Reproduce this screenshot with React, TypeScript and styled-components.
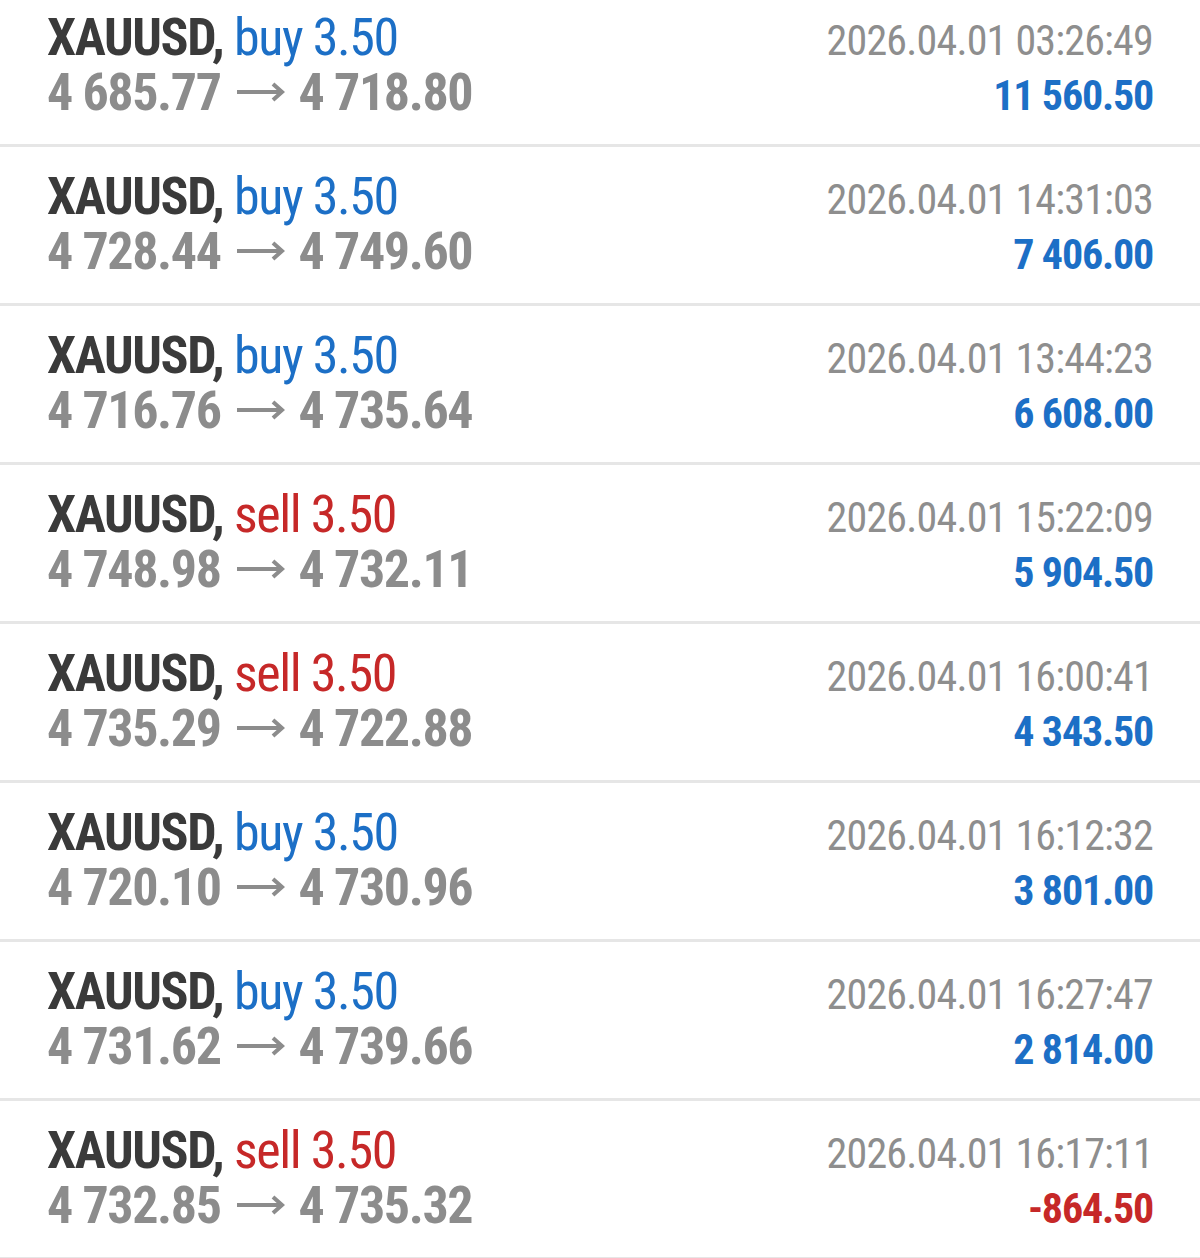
import React from 'react';
import styled, { createGlobalStyle } from 'styled-components';

const GlobalStyle = createGlobalStyle`
  html, body {
    margin: 0;
    padding: 0;
    background: #ffffff;
  }
  body {
    font-family: 'Roboto Condensed', 'Roboto', 'Liberation Sans', sans-serif;
    font-stretch: 75%;
  }
`;

const Page = styled.div`
  width: 1200px;
  height: 1258px;
  overflow: hidden;
  background: #ffffff;
`;

const List = styled.div`
  margin-top: -12px;
  display: flex;
  flex-direction: column;
`;

const Row = styled.div`
  display: grid;
  grid-template-columns: 1fr auto;
  grid-template-rows: 55px 55px;
  align-items: baseline;
  padding: 22px 47px 24px 47px;
  border-bottom: 3px solid #e6e6e6;
`;

const Title = styled.div`
  font-size: 52px;
  line-height: 55px;
  letter-spacing: -1.4px;
  color: #3a3a3a;
  white-space: nowrap;
`;

const Symbol = styled.span`
  font-weight: 700;
`;

const Side = styled.span<{ $sell?: boolean }>`
  color: ${(p) => (p.$sell ? '#c62828' : '#1c6fc6')};
`;

const Prices = styled.div`
  font-size: 52px;
  line-height: 55px;
  letter-spacing: -1.4px;
  font-weight: 700;
  color: #8c8c8c;
  white-space: nowrap;
`;

const ArrowIcon = styled.svg`
  width: 49px;
  height: 20px;
  margin: 0 14px 0 15px;
  vertical-align: 8px;
`;

const Time = styled.div`
  font-size: 42px;
  line-height: 55px;
  letter-spacing: -0.8px;
  color: #8e8e8e;
  text-align: right;
  white-space: nowrap;
`;

const Profit = styled.div<{ $loss?: boolean }>`
  font-size: 42px;
  line-height: 55px;
  letter-spacing: -1.2px;
  font-weight: 700;
  text-align: right;
  color: ${(p) => (p.$loss ? '#c62828' : '#1c6fc6')};
  white-space: nowrap;
`;

type Deal = {
  side: 'buy' | 'sell';
  open: string;
  close: string;
  time: string;
  profit: string;
};

const deals: Deal[] = [
  { side: 'buy', open: '4 685.77', close: '4 718.80', time: '2026.04.01 03:26:49', profit: '11 560.50' },
  { side: 'buy', open: '4 728.44', close: '4 749.60', time: '2026.04.01 14:31:03', profit: '7 406.00' },
  { side: 'buy', open: '4 716.76', close: '4 735.64', time: '2026.04.01 13:44:23', profit: '6 608.00' },
  { side: 'sell', open: '4 748.98', close: '4 732.11', time: '2026.04.01 15:22:09', profit: '5 904.50' },
  { side: 'sell', open: '4 735.29', close: '4 722.88', time: '2026.04.01 16:00:41', profit: '4 343.50' },
  { side: 'buy', open: '4 720.10', close: '4 730.96', time: '2026.04.01 16:12:32', profit: '3 801.00' },
  { side: 'buy', open: '4 731.62', close: '4 739.66', time: '2026.04.01 16:27:47', profit: '2 814.00' },
  { side: 'sell', open: '4 732.85', close: '4 735.32', time: '2026.04.01 16:17:11', profit: '-864.50' },
];

const Arrow = () => (
  <ArrowIcon viewBox="0 0 49 20" fill="none" stroke="#8c8c8c" strokeWidth={4}>
    <path d="M1 10H46" />
    <path d="M37 2L46 10L37 18" strokeLinejoin="miter" />
  </ArrowIcon>
);

const App = () => {
  return (
    <Page>
      <GlobalStyle />
      <List>
        {deals.map((d, i) => (
          <Row key={i}>
            <Title>
              <Symbol>XAUUSD,</Symbol> <Side $sell={d.side === 'sell'}>{d.side} 3.50</Side>
            </Title>
            <Time>{d.time}</Time>
            <Prices>
              {d.open}
              <Arrow />
              {d.close}
            </Prices>
            <Profit $loss={d.profit.startsWith('-')}>{d.profit}</Profit>
          </Row>
        ))}
      </List>
    </Page>
  );
};

export default App;
